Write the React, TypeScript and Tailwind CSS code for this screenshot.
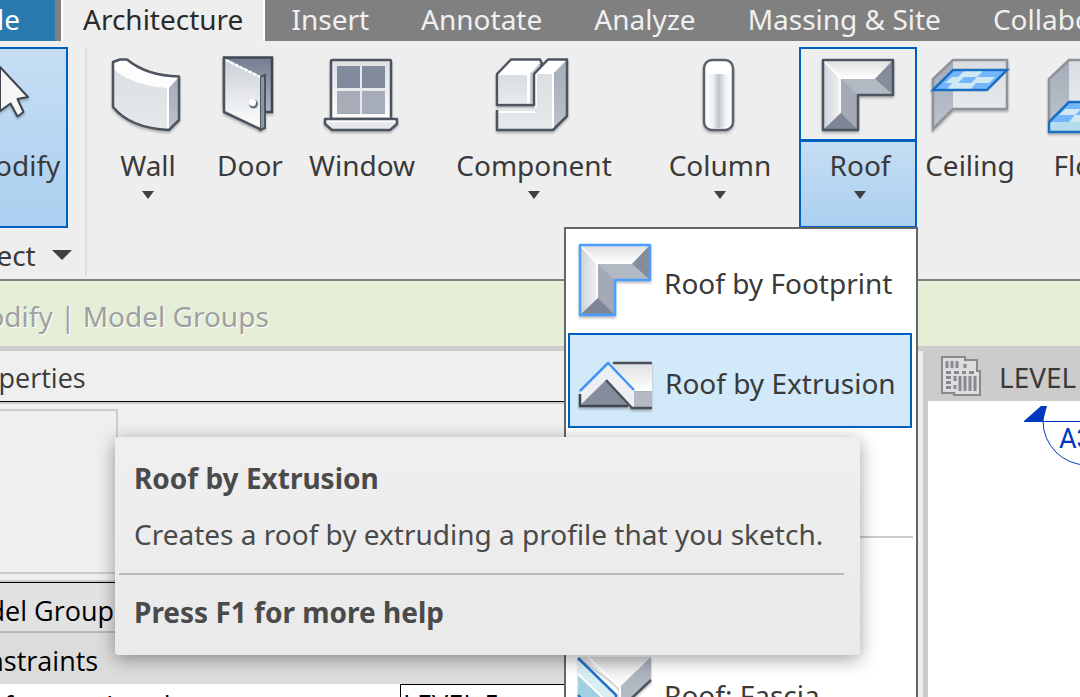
import React from 'react';

const MENU_TABS = ['Insert', 'Annotate', 'Analyze', 'Massing & Site', 'Collaborate'];

const Gradients = () => (
    <svg className="absolute w-0 h-0" aria-hidden="true">
        <defs>
            <linearGradient id="face" x1="0" y1="0" x2="0" y2="1">
                <stop offset="0" stopColor="#d9dce1" />
                <stop offset="1" stopColor="#e6eaec" />
            </linearGradient>
            <linearGradient id="side" x1="0" y1="0" x2="0" y2="1">
                <stop offset="0" stopColor="#a3acb8" />
                <stop offset="1" stopColor="#bcc2cb" />
            </linearGradient>
            <linearGradient id="dark" x1="0" y1="0" x2="0" y2="1">
                <stop offset="0" stopColor="#747d8f" />
                <stop offset="1" stopColor="#adb4c0" />
            </linearGradient>
            <linearGradient id="pale" x1="0" y1="0" x2="0" y2="1">
                <stop offset="0" stopColor="#dfe0e3" />
                <stop offset="1" stopColor="#ffffff" />
            </linearGradient>
            <linearGradient id="leaf" x1="0" y1="0" x2="0" y2="1">
                <stop offset="0" stopColor="#c9cdd4" />
                <stop offset="1" stopColor="#ffffff" />
            </linearGradient>
            <linearGradient id="slopeLeft" x1="0" y1="0" x2="1" y2="0">
                <stop offset="0" stopColor="#ced2d9" />
                <stop offset="1" stopColor="#f2f2f4" />
            </linearGradient>
            <linearGradient id="tube" x1="0" y1="0" x2="1" y2="0">
                <stop offset="0" stopColor="#ffffff" />
                <stop offset="0.3" stopColor="#eceef0" />
                <stop offset="0.5" stopColor="#c0c5ca" />
                <stop offset="0.75" stopColor="#eceef0" />
                <stop offset="1" stopColor="#ffffff" />
            </linearGradient>
        </defs>
    </svg>
);

const Icon: React.FC<{ children: React.ReactNode }> = ({ children }) => (
    <svg viewBox="0 0 80 80" className="w-20 h-20 shrink-0 overflow-visible drop-shadow-[0_2px_1px_rgba(0,0,0,0.25)]" aria-hidden="true">
        {children}
    </svg>
);

const ModifyIcon = () => (
    <Icon>
        <path d="M27 11 L55 41 L44.500 43 L50.500 56 L44.500 60.500 L37.500 47.500 L27 55 Z" fill="#f6f6f7" stroke="#3f4550" strokeWidth="2" strokeLinejoin="round" />
    </Icon>
);

const WallIcon = () => (
    <Icon>
        <path d="M5 6 L12 3.500 L19 3.500 C34 16 52 20 71 20.500 V64 L61 74 C38 73 18 67 5 51 Z" fill="url(#face)" />
        <path d="M5 6 L12 3.500 L19 3.500 C34 16 52 20 71 20.500 L61 32 C38 31 16 24 5 12 Z" fill="#fdfdfd" />
        <path d="M61 32 L71 21 V64 L61 74 Z" fill="url(#side)" />
        <path d="M60 31 V73" stroke="#fff" strokeWidth="2" />
        <path d="M5 6 L12 3.500 L19 3.500 C34 16 52 20 71 20.500 V64 L61 74 C38 73 18 67 5 51 Z" fill="none" stroke="#4c545f" strokeWidth="2.500" strokeLinejoin="round" />
    </Icon>
);

const DoorIcon = () => (
    <Icon>
        <path d="M14 1.500 H62 V56 H50 L14 50 Z" fill="url(#dark)" stroke="#3f4652" strokeWidth="2.500" />
        <path d="M50 21 L55 19 V72 L50 74 Z" fill="#8d96a4" stroke="#4c545f" strokeWidth="2" />
        <path d="M14 2 L50 20 V73 L14 56 Z" fill="url(#leaf)" />
        <path d="M14 2 V56 L52 74" fill="none" stroke="#4c545f" strokeWidth="2.500" strokeLinejoin="round" />
        <path d="M16 4 L50 21" stroke="#fff" strokeWidth="2.500" strokeDasharray="4 1" />
        <circle cx="43.500" cy="48" r="4.500" fill="#6c7480" />
        <circle cx="42.500" cy="46.500" r="3.500" fill="#fff" />
    </Icon>
);

const WindowIcon = () => (
    <Icon>
        <rect x="9" y="4" width="60" height="59" rx="1" fill="url(#pale)" stroke="#4c545f" strokeWidth="2.500" />
        <rect x="15" y="10" width="48" height="48" fill="#e8e9ec" />
        <path d="M15 10 H38 V32 H15 Z M40 10 H63 V32 H40 Z" fill="#828b9b" />
        <path d="M15 35 H38 V58 H15 Z M40 35 H63 V58 H40 Z" fill="#a6adb9" />
        <path d="M3 63 H75 V68 L68 74 H10 L3 68 Z" fill="#e6e8ec" stroke="#4c545f" strokeWidth="2.500" strokeLinejoin="round" />
        <path d="M5 65.500 H73" stroke="#fff" strokeWidth="1.500" />
    </Icon>
);

const ComponentIcon = () => (
    <Icon>
        <path d="M3 18 L17 3.500 H46 L48 8 L40 18 V49 H3 Z" fill="#fefefe" stroke="#4c545f" strokeWidth="2.500" strokeLinejoin="round" />
        <rect x="5" y="19" width="28" height="28" fill="url(#face)" />
        <path d="M36 18 L46 7 V43 L36 48 Z" fill="#c5cad1" />
        <path d="M3 54 L5 52 H40 V18 L54 3.500 H73 V60 L59 74 H3 Z" fill="url(#face)" />
        <path d="M40 18 L54 3.500 H73 L59 18 Z" fill="#fff" />
        <path d="M59 18 L73 4 V60 L59 74 Z" fill="url(#side)" />
        <path d="M59 18 V73 M4 56 H41 M42 18 V52" stroke="#fff" strokeWidth="2" />
        <path d="M40 50 V18 L54 3.500 H73 V60 L59 74 H3 V54" fill="none" stroke="#4c545f" strokeWidth="2.500" strokeLinejoin="round" />
    </Icon>
);

const ColumnIcon = () => (
    <Icon>
        <rect x="24" y="4" width="29" height="70" rx="8" fill="#fff" />
        <path d="M26 18 H51 V66 Q48 72 38 72 Q28 72 26 66 Z" fill="url(#tube)" />
        <rect x="24" y="4" width="29" height="70" rx="8" fill="none" stroke="#59616b" strokeWidth="2.500" />
    </Icon>
);

const RoofIcon: React.FC<{ outline?: string }> = ({ outline = '#4c545f' }) => (
    <Icon>
        <path d="M5 4 L23 23 V57 L5 74 Z" fill="url(#slopeLeft)" />
        <path d="M5 4 H75 L57 23 H23 Z" fill="url(#pale)" />
        <path d="M75 4 V39 L57 23 Z" fill="#858d9d" />
        <path d="M23 23 H57 L75 39 H40 Z" fill="#b3b9c3" />
        <path d="M23 23 L40 39 V74 L23 57 Z" fill="#a3aab6" />
        <path d="M5 74 L23 57 L40 74 Z" fill="#7d8697" />
        <path d="M5 4 L22 22 V57" stroke="#fff" strokeWidth="1.500" fill="none" />
        <path d="M5 4 H75 V39 H40 V74 H5 Z" fill="none" stroke={outline} strokeWidth="2.500" strokeLinejoin="round" />
    </Icon>
);

const CeilingIcon = () => (
    <Icon>
        <path d="M23 4 H77 V53 H23 Z" fill="url(#face)" />
        <path d="M3 23 L23 4 V53 L3 73 Z" fill="url(#side)" />
        <path d="M3 73 V23 L23 4 H77 V53 H23 Z" fill="none" stroke="#8f9296" strokeWidth="2.500" />
        <path d="M3 34 L23 14 H77 L57 34 Z" fill="#74b6fb" />
        <path d="M35 14 H54 L47 21 H28 Z M47 21 H65 L59 27 H41 Z M22 27 H41 L35 34 H16 Z M22 21 H34 L28 27 H15 Z M41 27 H46 L40 34 H35 Z" fill="#cfe8f2" />
        <path d="M3 34 L23 14 H77 L57 34 Z" fill="none" stroke="#1b6fc2" strokeWidth="2.500" />
    </Icon>
);

const FloorIcon = () => (
    <Icon>
        <path d="M22 4 H76 V46 H22 Z" fill="url(#face)" />
        <path d="M2 23 L22 4 V46 L2 66 Z" fill="url(#side)" />
        <path d="M2 66 V23 L22 4 H76" fill="none" stroke="#8f9296" strokeWidth="2.500" />
        <path d="M2 66 L22 46 H76 L56 66 Z" fill="#74b6fb" />
        <path d="M18 53 H34 L28 59 H12 Z M28 59 H44 L38 66 H22 Z" fill="#cfe8f2" />
        <path d="M2 66 H56 V76 H2 Z" fill="#b3dcec" />
        <path d="M2 66 L22 46 H76 L56 66 V76 H2 V66" fill="none" stroke="#1b6fc2" strokeWidth="2.500" />
    </Icon>
);

const ExtrusionIcon = () => (
    <Icon>
        <path d="M33 22 H76 V50 H58 Z" fill="url(#pale)" />
        <path d="M58 51 H76 V67 H58 Z" fill="#b4bac5" />
        <path d="M37 22 H76" stroke="#4b5058" strokeWidth="2.500" />
        <path d="M4 65 L30 39 L54 65 Z" fill="#858d9c" />
        <path d="M4 50 L32 22 L58 49 V67 H54 L30 39 L4 64 Z" fill="#eeeff2" />
        <path d="M4 53 V65 H52" fill="none" stroke="#3f444d" strokeWidth="2.500" />
        <path d="M30 39 L56 67 H76" fill="none" stroke="#4b5058" strokeWidth="2.500" />
        <path d="M4 50 L32 22 L58 49" fill="none" stroke="#4096f8" strokeWidth="2.500" />
    </Icon>
);

const FasciaIcon = () => (
    <Icon>
        <path d="M3 4 H76 L45 34 Z" fill="url(#pale)" />
        <path d="M45 34 L76 4 V27 L45 56 Z" fill="url(#side)" />
        <path d="M76 27 L45 56" stroke="#4c545f" strokeWidth="2.500" />
        <path d="M3 4 L43 42 V76 H37 L3 41 Z" fill="#d8eef4" />
        <path d="M3 22 L40 58 V76 H3 Z" fill="#a3cfe2" />
        <path d="M3 21 L42 58" stroke="#fff" strokeWidth="2" />
        <path d="M3 5 L41 42 V76 M3 42 L36 76" fill="none" stroke="#2371c4" strokeWidth="2.500" />
        <path d="M13 4 L45 35 V76" fill="none" stroke="#fff" strokeWidth="2" />
    </Icon>
);

const PlanIcon = () => (
    <svg viewBox="0 0 40 40" className="w-10 h-10 shrink-0" aria-hidden="true">
        <path d="M1 1 H24 V4 H36 V15 H39 V39 H13 V37 H1 Z" fill="#dcdddf" stroke="#87898d" strokeWidth="2" />
        <path d="M6 5 V12 M11 5 V12 M16 5 V12 M24 8 V12 M19 20 V35 M24 20 V35 M29 20 V35 M34 20 V35 M14 20 V25 M14 29 V33" stroke="#87898d" strokeWidth="3" />
        <path d="M5 16.500 H10 M13 16.500 H18 M21 16.500 H25 M28 16.500 H33 M5 21.500 H10 M5 26.500 H10 M5 31.500 H10" stroke="#87898d" strokeWidth="3" />
    </svg>
);

const Arrow = () => (
    <svg viewBox="0 0 12 8" className="w-3 h-2" aria-hidden="true">
        <path d="M0 0 H12 L6 8 Z" fill="#404040" />
    </svg>
);

interface RibbonButtonProps {
    label: string;
    icon: React.ReactNode;
    width: string;
    arrow?: boolean;
}

const RibbonButton: React.FC<RibbonButtonProps> = ({ label, icon, width, arrow }) => (
    <button className={`flex flex-col items-center shrink-0 h-[181px] pt-[9px] ${width}`}>
        {icon}
        <span className="leading-9 mt-[11px] whitespace-nowrap">{label}</span>
        {arrow && <span className="mt-2 flex"><Arrow /></span>}
    </button>
);

const RoofMenu = () => (
    <div role="menu" className="absolute -right-px top-full z-10 w-[354px] h-[480px] -mt-px bg-white border-2 border-[#666] text-left">
        <button role="menuitem" className="flex items-center w-full h-[104px] pl-[9px] gap-[9px] whitespace-nowrap">
            <RoofIcon outline="#4aa0ff" />
            <span className="pt-1">Roof by Footprint</span>
        </button>
        <button role="menuitem" className="flex items-center w-[344px] h-[95px] mx-[2px] pl-[6px] gap-[9px] whitespace-nowrap bg-[#d2e9f9] border-2 border-[#0060c0]">
            <ExtrusionIcon />
            <span className="pt-1">Roof by Extrusion</span>
        </button>
        <hr className="mt-[108px] ml-[100px] mr-[3px] border-t-2 border-[#ccc]" />
        <button role="menuitem" className="flex items-center w-full h-[104px] mt-[103px] pl-[9px] gap-[9px] whitespace-nowrap">
            <FasciaIcon />
            <span className="pt-1">Roof: Fascia</span>
        </button>
    </div>
);

const Tooltip = () => (
    <div role="tooltip" className="absolute z-20 left-[115px] top-[437px] w-[745px] h-[218px] rounded bg-linear-to-b from-[#efefef] to-[#eaeaea] text-[#4a4a4a] shadow-[0_4px_18px_rgba(0,0,0,0.38)] whitespace-nowrap">
        <p className="font-bold leading-9 pt-[23px] pl-[19px]">Roof by Extrusion</p>
        <p className="leading-9 pt-5 pl-[19px]">Creates a roof by extruding a profile that you sketch.</p>
        <hr className="mt-[21px] ml-1 mr-4 border-t-2 border-[#bababa]" />
        <p className="font-bold leading-9 pt-[19px] pl-[19px]">Press F1 for more help</p>
    </div>
);

const PropertiesPanel = () => (
    <aside className="w-[923px] shrink-0 border-r-8 border-[#eee] bg-[#efefef] font-['Open_Sans',sans-serif] text-[27px] text-black overflow-hidden">
        <h2 className="h-[50px] leading-[54px] -ml-[45px] text-[#3a3a3a]">Properties</h2>
        <div className="h-[3px] border-t border-black bg-[#ccc]" />
        <div className="mt-[5px] w-[118px] h-[165px] border-2 border-l-0 border-[#ccc]" />
        <div className="mt-[6px] h-[3px] border-b border-black bg-[#ccc]" />
        <div className="h-[50px] leading-[55px] bg-[#e2e2e2] border-b-2 border-[#b8b8b8] whitespace-nowrap">
            <span className="-ml-[52px]">Model Groups (1)</span>
        </div>
        <div className="h-[51px] leading-[55px] bg-[#dcdcdc]">
            <span className="-ml-[46px]">Constraints</span>
        </div>
        <div className="flex h-[50px] leading-[44px] bg-white">
            <div className="w-[400px] whitespace-nowrap"><span className="-ml-[28px]">Reference Level</span></div>
            <div className="flex-1 border border-r-0 border-black pl-[2px] leading-[40px]">LEVEL 5</div>
        </div>
    </aside>
);

const App: React.FC = () => {
    return (
        <div className="relative h-screen flex flex-col overflow-hidden bg-[#eee] font-['Noto_Sans','Open_Sans',sans-serif] text-[28px] text-[#3a3a3a]">
            <Gradients />

            {/* Tabs */}
            <nav className="flex shrink-0 h-[41px] leading-8 bg-[#808080] text-[#f0f0f0] whitespace-nowrap">
                <button className="w-[100px] -ml-[45px] mr-[6px] pr-[35px] pb-1 shrink-0 text-right text-white bg-[#2a7ab0]">File</button>
                <button className="px-5 pb-1 shrink-0 bg-[#eee] border-x-2 border-white text-[#2a2a2a]">Architecture</button>
                <div className="flex">
                    {MENU_TABS.map(tab => (
                        <button key={tab} className="px-[26px] pb-1 shrink-0">{tab}</button>
                    ))}
                </div>
            </nav>

            {/* Ribbon */}
            <div className="relative z-10 flex shrink-0 h-[240px] pt-[6px] border-b-2 border-[#808080]">
                <div className="w-[68px] shrink-0 mr-[17px]">
                    <button className="-ml-[42px] w-[110px] h-[181px] pt-[7px] flex flex-col items-center bg-linear-to-b from-[#c6ddf3] to-[#abd0f0] border-2 border-[#0060c0]">
                        <ModifyIcon />
                        <span className="leading-9 mt-[11px] pl-1">Modify</span>
                    </button>
                    <button className="-ml-[42px] mt-[9px] flex items-center leading-9 gap-4">
                        Select
                        <svg viewBox="0 0 20 10" className="w-5 h-[10px]" aria-hidden="true"><path d="M0 0 H20 L10 10 Z" fill="#404040" /></svg>
                    </button>
                </div>
                <div className="w-[2px] h-[229px] shrink-0 mr-3 bg-[#ddd]" />
                <RibbonButton label="Wall" icon={<WallIcon />} width="w-[98px]" arrow />
                <RibbonButton label="Door" icon={<DoorIcon />} width="w-[106px]" />
                <RibbonButton label="Window" icon={<WindowIcon />} width="w-[118px]" />
                <RibbonButton label="Component" icon={<ComponentIcon />} width="w-[226px]" arrow />
                <RibbonButton label="Column" icon={<ColumnIcon />} width="w-[146px]" arrow />
                <div className="relative shrink-0 ml-[6px] w-[118px] h-[181px]">
                    <button aria-label="Roof by Footprint" className="flex justify-center w-full h-[94px] pt-[7px] border-2 border-[#0060c0]">
                        <RoofIcon />
                    </button>
                    <button aria-haspopup="menu" className="flex flex-col items-center w-full h-[87px] pt-[5px] pl-1 bg-linear-to-b from-[#c6ddf3] to-[#abd0f0] border-2 border-t border-[#0060c0]">
                        <span className="leading-9">Roof</span>
                        <span className="mt-2 flex"><Arrow /></span>
                    </button>
                    <RoofMenu />
                </div>
                <RibbonButton label="Ceiling" icon={<CeilingIcon />} width="w-[106px]" />
                <RibbonButton label="Floor" icon={<FloorIcon />} width="w-[128px]" />
            </div>

            {/* Options bar */}
            <div className="shrink-0 h-[65px] leading-[70px] bg-[#e5efd8] text-[#a0a0a0] [text-shadow:1px_1px_0_#fff] whitespace-nowrap">
                <span className="-ml-[38px]">Modify | Model Groups</span>
            </div>

            <div className="flex flex-1 min-h-0 border-t-[5px] border-[#ccc]">
                <PropertiesPanel />
                <main className="flex-1 min-w-0 flex flex-col bg-[#ccc] overflow-hidden">
                    <button className="flex items-center shrink-0 h-[50px] pl-[18px] gap-[18px] whitespace-nowrap">
                        <PlanIcon />
                        <span className="pt-[2px]">LEVEL 5</span>
                    </button>
                    <div className="relative flex-1 ml-[5px] bg-white overflow-hidden">
                        <svg className="absolute left-24 top-[5px] w-32 h-16" viewBox="0 0 128 64" aria-hidden="true">
                            <path d="M0 15 L17 0 H23 L19 15 Z" fill="#0039c0" />
                            <path d="M0 15.500 H128" stroke="#0039c0" strokeWidth="1" />
                            <circle cx="63" cy="15" r="44" fill="none" stroke="#0039c0" strokeWidth="1" />
                        </svg>
                        <span className="absolute left-[131px] top-5 leading-9 font-['Roboto','Liberation_Sans',sans-serif] text-[27px] text-[#0039c0]">A3</span>
                    </div>
                </main>
            </div>

            <Tooltip />
        </div>
    );
};

export default App;
